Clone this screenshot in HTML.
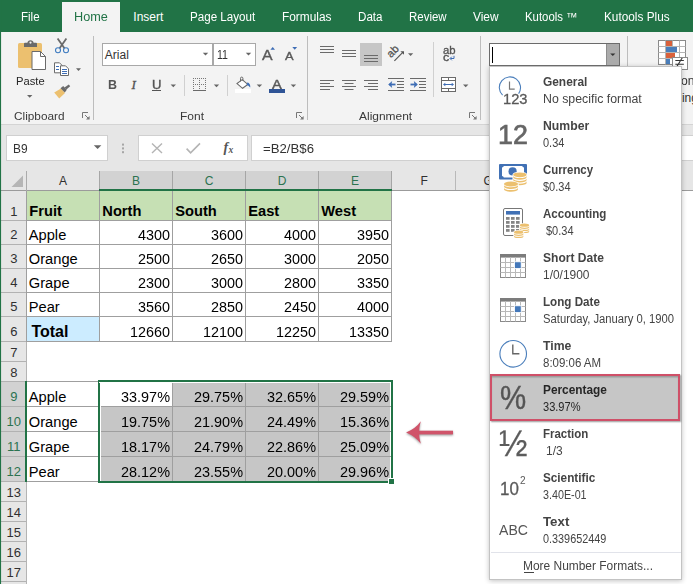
<!DOCTYPE html>
<html>
<head>
<meta charset="utf-8">
<title>Excel - Percentage number format</title>
<style>
*{box-sizing:border-box;margin:0;padding:0}
html,body{width:693px;height:584px;overflow:hidden;background:#fff}
body{position:relative;font-family:"Liberation Sans",sans-serif;font-size:12px;color:#444}
#app{position:absolute;left:0;top:0;width:693px;height:584px;overflow:hidden;background:#fff}
#app div,#app span,#app svg{position:absolute}
.t{white-space:nowrap;line-height:1;transform-origin:0 0}
</style>
</head>
<body>
<div id="app">
<div id="grid" style="left:0;top:0;width:693px;height:584px">
<div style="left:0px;top:171px;width:693px;height:19px;background:#e6e6e6;"></div>
<div style="left:100px;top:171px;width:292px;height:19px;background:#d2d2d2;"></div>
<span class="t" style="left:59.00px;top:175px;font-size:12px;color:#303030;">A</span>
<span class="t" style="left:132.00px;top:175px;font-size:12px;color:#2b7350;">B</span>
<span class="t" style="left:204.67px;top:175px;font-size:12px;color:#2b7350;">C</span>
<span class="t" style="left:277.67px;top:175px;font-size:12px;color:#2b7350;">D</span>
<span class="t" style="left:351.00px;top:175px;font-size:12px;color:#2b7350;">E</span>
<span class="t" style="left:420.53px;top:175px;font-size:12px;color:#303030;">F</span>
<span class="t" style="left:483.53px;top:175px;font-size:12px;color:#303030;">G</span>
<span class="t" style="left:547.87px;top:175px;font-size:12px;color:#303030;">H</span>
<span class="t" style="left:614.53px;top:175px;font-size:12px;color:#303030;">I</span>
<div style="left:99px;top:171px;width:1px;height:19px;background:#a6a6a6;"></div>
<div style="left:172px;top:171px;width:1px;height:19px;background:#a6a6a6;"></div>
<div style="left:245px;top:171px;width:1px;height:19px;background:#a6a6a6;"></div>
<div style="left:318px;top:171px;width:1px;height:19px;background:#a6a6a6;"></div>
<div style="left:391px;top:171px;width:1px;height:19px;background:#a6a6a6;"></div>
<div style="left:455px;top:171px;width:1px;height:19px;background:#b9b9b9;"></div>
<div style="left:519px;top:171px;width:1px;height:19px;background:#b9b9b9;"></div>
<div style="left:583px;top:171px;width:1px;height:19px;background:#b9b9b9;"></div>
<div style="left:647px;top:171px;width:1px;height:19px;background:#b9b9b9;"></div>
<div style="left:1px;top:190px;width:692px;height:1px;background:#9b9b9b;"></div>
<div style="left:99px;top:189px;width:293px;height:2px;background:#217346;"></div>
<div style="left:26px;top:171px;width:1px;height:20px;background:#ababab;"></div>
<svg style="left:11px;top:175px" width="13" height="13" viewBox="0 0 13 13"><path d="M12 0.5V12H0.5Z" fill="#b5b5b5"/></svg>
<div style="left:1px;top:191px;width:25px;height:393px;background:#e6e6e6;"></div>
<div style="left:1px;top:382px;width:25px;height:99px;background:#d2d2d2;"></div>
<span class="t" style="left:10.18px;top:205px;font-size:13px;color:#303030;">1</span>
<div style="left:1px;top:220px;width:25px;height:1px;background:#b2b2b2;"></div>
<span class="t" style="left:10.18px;top:228px;font-size:13px;color:#303030;">2</span>
<div style="left:1px;top:244px;width:25px;height:1px;background:#b2b2b2;"></div>
<span class="t" style="left:10.18px;top:252px;font-size:13px;color:#303030;">3</span>
<div style="left:1px;top:268px;width:25px;height:1px;background:#b2b2b2;"></div>
<span class="t" style="left:10.18px;top:276px;font-size:13px;color:#303030;">4</span>
<div style="left:1px;top:292px;width:25px;height:1px;background:#b2b2b2;"></div>
<span class="t" style="left:10.18px;top:300px;font-size:13px;color:#303030;">5</span>
<div style="left:1px;top:316px;width:25px;height:1px;background:#b2b2b2;"></div>
<span class="t" style="left:10.18px;top:325px;font-size:13px;color:#303030;">6</span>
<div style="left:1px;top:341px;width:25px;height:1px;background:#b2b2b2;"></div>
<span class="t" style="left:10.18px;top:346px;font-size:13px;color:#303030;">7</span>
<div style="left:1px;top:361px;width:25px;height:1px;background:#b2b2b2;"></div>
<span class="t" style="left:10.18px;top:366px;font-size:13px;color:#303030;">8</span>
<div style="left:1px;top:381px;width:25px;height:1px;background:#b2b2b2;"></div>
<span class="t" style="left:10.18px;top:390px;font-size:13px;color:#2b7350;">9</span>
<div style="left:1px;top:406px;width:25px;height:1px;background:#b2b2b2;"></div>
<span class="t" style="left:6.57px;top:415px;font-size:13px;color:#2b7350;">10</span>
<div style="left:1px;top:431px;width:25px;height:1px;background:#b2b2b2;"></div>
<span class="t" style="left:7.05px;top:440px;font-size:13px;color:#2b7350;">11</span>
<div style="left:1px;top:456px;width:25px;height:1px;background:#b2b2b2;"></div>
<span class="t" style="left:6.57px;top:465px;font-size:13px;color:#2b7350;">12</span>
<div style="left:1px;top:481px;width:25px;height:1px;background:#b2b2b2;"></div>
<span class="t" style="left:6.57px;top:486px;font-size:13px;color:#303030;">13</span>
<div style="left:1px;top:501px;width:25px;height:1px;background:#b2b2b2;"></div>
<span class="t" style="left:6.57px;top:506px;font-size:13px;color:#303030;">14</span>
<div style="left:1px;top:521px;width:25px;height:1px;background:#b2b2b2;"></div>
<span class="t" style="left:6.57px;top:526px;font-size:13px;color:#303030;">15</span>
<div style="left:1px;top:541px;width:25px;height:1px;background:#b2b2b2;"></div>
<span class="t" style="left:6.57px;top:546px;font-size:13px;color:#303030;">16</span>
<div style="left:1px;top:561px;width:25px;height:1px;background:#b2b2b2;"></div>
<span class="t" style="left:6.57px;top:566px;font-size:13px;color:#303030;">17</span>
<div style="left:1px;top:581px;width:25px;height:1px;background:#b2b2b2;"></div>
<span class="t" style="left:6.57px;top:586px;font-size:13px;color:#303030;">18</span>
<div style="left:1px;top:601px;width:25px;height:1px;background:#b2b2b2;"></div>
<div style="left:26px;top:191px;width:1px;height:393px;background:#b4b4b4;"></div>
<div style="left:26px;top:191px;width:1px;height:151px;background:#9f9f9f;"></div>
<div style="left:26px;top:382px;width:1px;height:100px;background:#9f9f9f;"></div>
<div style="left:25px;top:381px;width:2px;height:101px;background:#217346;"></div>
<div style="left:27px;top:191px;width:365px;height:29px;background:#c6e0b4;"></div>
<div style="left:27px;top:317px;width:72px;height:24px;background:#ccecff;"></div>
<div style="left:100px;top:383px;width:290px;height:98px;background:#c6c6c6;"></div>
<div style="left:100px;top:383px;width:72px;height:23px;background:#fff;"></div>
<div style="left:99px;top:191px;width:1px;height:151px;background:#9f9f9f;"></div>
<div style="left:99px;top:382px;width:1px;height:100px;background:#9f9f9f;"></div>
<div style="left:172px;top:191px;width:1px;height:151px;background:#9f9f9f;"></div>
<div style="left:172px;top:382px;width:1px;height:100px;background:#9f9f9f;"></div>
<div style="left:245px;top:191px;width:1px;height:151px;background:#9f9f9f;"></div>
<div style="left:245px;top:382px;width:1px;height:100px;background:#9f9f9f;"></div>
<div style="left:318px;top:191px;width:1px;height:151px;background:#9f9f9f;"></div>
<div style="left:318px;top:382px;width:1px;height:100px;background:#9f9f9f;"></div>
<div style="left:391px;top:191px;width:1px;height:151px;background:#9f9f9f;"></div>
<div style="left:391px;top:382px;width:1px;height:100px;background:#9f9f9f;"></div>
<div style="left:27px;top:220px;width:365px;height:1px;background:#9f9f9f;"></div>
<div style="left:27px;top:244px;width:365px;height:1px;background:#9f9f9f;"></div>
<div style="left:27px;top:268px;width:365px;height:1px;background:#9f9f9f;"></div>
<div style="left:27px;top:292px;width:365px;height:1px;background:#9f9f9f;"></div>
<div style="left:27px;top:316px;width:365px;height:1px;background:#9f9f9f;"></div>
<div style="left:27px;top:341px;width:365px;height:1px;background:#9f9f9f;"></div>
<div style="left:27px;top:406px;width:365px;height:1px;background:#9f9f9f;"></div>
<div style="left:27px;top:431px;width:365px;height:1px;background:#9f9f9f;"></div>
<div style="left:27px;top:456px;width:365px;height:1px;background:#9f9f9f;"></div>
<div style="left:27px;top:481px;width:365px;height:1px;background:#9f9f9f;"></div>
<div style="left:27px;top:381px;width:72px;height:1px;background:#9f9f9f;"></div>
<div style="left:98px;top:380px;width:295px;height:103px;border:2px solid #217346"></div>
<div style="left:99px;top:382px;width:292px;height:1px;background:#fff;"></div>
<div style="left:100px;top:382px;width:1px;height:99px;background:#fff;"></div>
<div style="left:388px;top:478px;width:6px;height:6px;background:#fff;"></div>
<div style="left:389px;top:479px;width:5px;height:5px;background:#217346;"></div>
<span class="t" style="left:29.30px;top:204px;font-size:14.667px;color:#000;font-weight:bold;">Fruit</span>
<span class="t" style="left:102.30px;top:204px;font-size:14.667px;color:#000;font-weight:bold;">North</span>
<span class="t" style="left:175.30px;top:204px;font-size:14.667px;color:#000;font-weight:bold;">South</span>
<span class="t" style="left:248.30px;top:204px;font-size:14.667px;color:#000;font-weight:bold;">East</span>
<span class="t" style="left:321.30px;top:204px;font-size:14.667px;color:#000;font-weight:bold;">West</span>
<span class="t" style="left:28.80px;top:228px;font-size:14.667px;color:#000;">Apple</span>
<span class="t" style="left:138.10px;top:228px;font-size:14.667px;color:#000;transform:scaleX(0.9807);">4300</span>
<span class="t" style="left:211.10px;top:228px;font-size:14.667px;color:#000;transform:scaleX(0.9807);">3600</span>
<span class="t" style="left:284.10px;top:228px;font-size:14.667px;color:#000;transform:scaleX(0.9807);">4000</span>
<span class="t" style="left:357.10px;top:228px;font-size:14.667px;color:#000;transform:scaleX(0.9807);">3950</span>
<span class="t" style="left:28.80px;top:252px;font-size:14.667px;color:#000;">Orange</span>
<span class="t" style="left:138.10px;top:252px;font-size:14.667px;color:#000;transform:scaleX(0.9807);">2500</span>
<span class="t" style="left:211.10px;top:252px;font-size:14.667px;color:#000;transform:scaleX(0.9807);">2650</span>
<span class="t" style="left:284.10px;top:252px;font-size:14.667px;color:#000;transform:scaleX(0.9807);">3000</span>
<span class="t" style="left:357.10px;top:252px;font-size:14.667px;color:#000;transform:scaleX(0.9807);">2050</span>
<span class="t" style="left:28.80px;top:276px;font-size:14.667px;color:#000;">Grape</span>
<span class="t" style="left:138.10px;top:276px;font-size:14.667px;color:#000;transform:scaleX(0.9807);">2300</span>
<span class="t" style="left:211.10px;top:276px;font-size:14.667px;color:#000;transform:scaleX(0.9807);">3000</span>
<span class="t" style="left:284.10px;top:276px;font-size:14.667px;color:#000;transform:scaleX(0.9807);">2800</span>
<span class="t" style="left:357.10px;top:276px;font-size:14.667px;color:#000;transform:scaleX(0.9807);">3350</span>
<span class="t" style="left:28.80px;top:300px;font-size:14.667px;color:#000;">Pear</span>
<span class="t" style="left:138.10px;top:300px;font-size:14.667px;color:#000;transform:scaleX(0.9807);">3560</span>
<span class="t" style="left:211.10px;top:300px;font-size:14.667px;color:#000;transform:scaleX(0.9807);">2850</span>
<span class="t" style="left:284.10px;top:300px;font-size:14.667px;color:#000;transform:scaleX(0.9807);">2450</span>
<span class="t" style="left:357.10px;top:300px;font-size:14.667px;color:#000;transform:scaleX(0.9807);">4000</span>
<span class="t" style="left:31.40px;top:324px;font-size:16px;color:#000;font-weight:bold;">Total</span>
<span class="t" style="left:130.10px;top:325px;font-size:14.667px;color:#000;transform:scaleX(0.9807);">12660</span>
<span class="t" style="left:203.10px;top:325px;font-size:14.667px;color:#000;transform:scaleX(0.9807);">12100</span>
<span class="t" style="left:276.10px;top:325px;font-size:14.667px;color:#000;transform:scaleX(0.9807);">12250</span>
<span class="t" style="left:349.10px;top:325px;font-size:14.667px;color:#000;transform:scaleX(0.9807);">13350</span>
<span class="t" style="left:28.80px;top:390px;font-size:14.667px;color:#000;">Apple</span>
<span class="t" style="left:121.10px;top:390px;font-size:14.667px;color:#000;transform:scaleX(0.9850);">33.97%</span>
<span class="t" style="left:194.10px;top:390px;font-size:14.667px;color:#000;transform:scaleX(0.9850);">29.75%</span>
<span class="t" style="left:267.10px;top:390px;font-size:14.667px;color:#000;transform:scaleX(0.9850);">32.65%</span>
<span class="t" style="left:340.10px;top:390px;font-size:14.667px;color:#000;transform:scaleX(0.9850);">29.59%</span>
<span class="t" style="left:28.80px;top:415px;font-size:14.667px;color:#000;">Orange</span>
<span class="t" style="left:121.10px;top:415px;font-size:14.667px;color:#000;transform:scaleX(0.9850);">19.75%</span>
<span class="t" style="left:194.10px;top:415px;font-size:14.667px;color:#000;transform:scaleX(0.9850);">21.90%</span>
<span class="t" style="left:267.10px;top:415px;font-size:14.667px;color:#000;transform:scaleX(0.9850);">24.49%</span>
<span class="t" style="left:340.10px;top:415px;font-size:14.667px;color:#000;transform:scaleX(0.9850);">15.36%</span>
<span class="t" style="left:28.80px;top:440px;font-size:14.667px;color:#000;">Grape</span>
<span class="t" style="left:121.10px;top:440px;font-size:14.667px;color:#000;transform:scaleX(0.9850);">18.17%</span>
<span class="t" style="left:194.10px;top:440px;font-size:14.667px;color:#000;transform:scaleX(0.9850);">24.79%</span>
<span class="t" style="left:267.10px;top:440px;font-size:14.667px;color:#000;transform:scaleX(0.9850);">22.86%</span>
<span class="t" style="left:340.10px;top:440px;font-size:14.667px;color:#000;transform:scaleX(0.9850);">25.09%</span>
<span class="t" style="left:28.80px;top:465px;font-size:14.667px;color:#000;">Pear</span>
<span class="t" style="left:121.10px;top:465px;font-size:14.667px;color:#000;transform:scaleX(0.9850);">28.12%</span>
<span class="t" style="left:194.10px;top:465px;font-size:14.667px;color:#000;transform:scaleX(0.9850);">23.55%</span>
<span class="t" style="left:267.10px;top:465px;font-size:14.667px;color:#000;transform:scaleX(0.9850);">20.00%</span>
<span class="t" style="left:340.10px;top:465px;font-size:14.667px;color:#000;transform:scaleX(0.9850);">29.96%</span>
<svg style="left:396px;top:412px;filter:drop-shadow(0.8px 1px 0.8px rgba(0,0,0,.4))" width="70" height="42" viewBox="396 412 70 42"><path d="M406.1 432.5Q416 428.2 420.8 421.2Q417.4 432.5 420.8 443.7Q416 436.8 406.1 432.5Z" fill="#d0546a"/><rect x="418" y="430.7" width="35" height="3.7" fill="#d0546a"/></svg>
</div>
<div id="chrome" style="left:0;top:0;width:693px;height:171px">
<div style="left:0px;top:0px;width:693px;height:32px;background:#217346;"></div>
<div style="left:62px;top:2px;width:58px;height:30px;background:#f3f3f3;"></div>
<div style="left:0px;top:32px;width:693px;height:92px;background:#f3f3f3;"></div>
<div style="left:0px;top:124px;width:693px;height:1px;background:#d4d4d4;"></div>
<div style="left:0px;top:125px;width:693px;height:46px;background:#e6e6e6;"></div>
<span class="t" style="left:21.00px;top:11px;font-size:12px;color:#fff;transform:scaleX(0.9619);">File</span>
<span class="t" style="left:74.00px;top:11px;font-size:12px;color:#217346;transform:scaleX(1.0559);">Home</span>
<span class="t" style="left:133.30px;top:11px;font-size:12px;color:#fff;">Insert</span>
<span class="t" style="left:189.70px;top:11px;font-size:12px;color:#fff;transform:scaleX(0.9675);">Page Layout</span>
<span class="t" style="left:281.90px;top:11px;font-size:12px;color:#fff;transform:scaleX(0.9898);">Formulas</span>
<span class="t" style="left:357.70px;top:11px;font-size:12px;color:#fff;transform:scaleX(0.9666);">Data</span>
<span class="t" style="left:408.90px;top:11px;font-size:12px;color:#fff;transform:scaleX(0.9556);">Review</span>
<span class="t" style="left:472.50px;top:11px;font-size:12px;color:#fff;transform:scaleX(0.9925);">View</span>
<span class="t" style="left:524.50px;top:11px;font-size:12px;color:#fff;transform:scaleX(0.9483);">Kutools ™</span>
<span class="t" style="left:603.90px;top:11px;font-size:12px;color:#fff;transform:scaleX(0.9835);">Kutools Plus</span>
<div style="left:93px;top:36px;width:1px;height:84px;background:#bdbdbd;"></div>
<div style="left:307px;top:36px;width:1px;height:84px;background:#bdbdbd;"></div>
<div style="left:480px;top:36px;width:1px;height:84px;background:#bdbdbd;"></div>
<div style="left:627px;top:36px;width:1px;height:84px;background:#bdbdbd;"></div>
<div style="left:184px;top:75px;width:1px;height:21px;background:#d0d0d0;"></div>
<div style="left:227px;top:75px;width:1px;height:21px;background:#d0d0d0;"></div>
<div style="left:433px;top:42px;width:1px;height:55px;background:#d0d0d0;"></div>
<span class="t" style="left:13.50px;top:111px;font-size:11.5px;color:#3a3a3a;transform:scaleX(1.0259);">Clipboard</span>
<span class="t" style="left:180.00px;top:111px;font-size:11.5px;color:#3a3a3a;transform:scaleX(1.0430);">Font</span>
<span class="t" style="left:359.00px;top:111px;font-size:11.5px;color:#3a3a3a;transform:scaleX(1.0403);">Alignment</span>
<span class="t" style="left:16.20px;top:76px;font-size:11.5px;color:#262626;transform:scaleX(0.9726);">Paste</span>
<div style="left:102px;top:43px;width:111px;height:23px;background:#fff;border:1px solid #a8a8a8"></div>
<div style="left:213px;top:43px;width:43px;height:23px;background:#fff;border:1px solid #a8a8a8"></div>
<span class="t" style="left:104.80px;top:49px;font-size:12px;color:#333;">Arial</span>
<span class="t" style="left:216.50px;top:49px;font-size:12px;color:#333;transform:scaleX(0.8830);">11</span>
<span class="t" style="left:108.20px;top:79px;font-size:12.5px;color:#555;font-weight:bold;transform:scaleX(0.9970);">B</span>
<span class="t" style="left:131.40px;top:78px;font-size:13px;color:#555;font-style:italic;font-family:'Liberation Serif',serif;-webkit-text-stroke:0.35px #555;">I</span>
<span class="t" style="left:151.80px;top:79px;font-size:12.5px;color:#555;transform:scaleX(1.0413);-webkit-text-stroke:0.4px #555;">U</span>
<div style="left:152px;top:90px;width:9px;height:1px;background:#555;"></div>
<span class="t" style="left:261.60px;top:48px;font-size:14px;color:#595959;transform:scaleX(1.1351);-webkit-text-stroke:0.35px #595959;">A</span>
<span class="t" style="left:284.70px;top:51px;font-size:11.5px;color:#595959;transform:scaleX(1.1212);-webkit-text-stroke:0.35px #595959;">A</span>
<span class="t" style="left:272.40px;top:78.5px;font-size:12.5px;color:#595959;transform:scaleX(1.1754);-webkit-text-stroke:0.45px #595959;">A</span>
<span class="t" style="left:442.80px;top:45px;font-size:11.5px;color:#555;transform:scaleX(0.9850);-webkit-text-stroke:0.35px #555;">ab</span>
<span class="t" style="left:443.00px;top:52px;font-size:11.5px;color:#555;transform:scaleX(1.0783);-webkit-text-stroke:0.35px #555;">c</span>
<span class="t" style="left:643.25px;top:75px;font-size:12px;color:#333;transform:scaleX(1.0160);">Conditional</span>
<span class="t" style="left:640.56px;top:91.5px;font-size:12px;color:#333;">Formatting</span>
<svg style="left:0;top:0" width="693" height="171" viewBox="0 0 693 171"><rect x="18" y="43" width="24" height="25" rx="1.5" fill="#ecc06f"/><path d="M24 47v-3.2q0-1 1-1h2.4q0.3-2.6 3.1-2.6t3.1 2.6H36q1 0 1 1V47z" fill="#6a6a6a"/><circle cx="30.5" cy="42.6" r="1.1" fill="#f3f3f3"/><path d="M32 51.5h8.5l5 5v13h-13.5z" fill="#fff" stroke="#6a6a6a" stroke-width="1"/><path d="M40.5 51.5v5h5" fill="none" stroke="#6a6a6a" stroke-width="1"/><path d="M27 95h5.4l-2.7 2.8z" fill="#666"/><path d="M57.6 38.6L64.6 48.4M66.4 38.6L59.4 48.4" stroke="#6a6a6a" stroke-width="1.8" fill="none"/><circle cx="58" cy="50.2" r="2.5" fill="#f3f3f3" stroke="#3f7cc0" stroke-width="1.1"/><circle cx="66" cy="50.2" r="2.5" fill="#f3f3f3" stroke="#3f7cc0" stroke-width="1.1"/><path d="M54.5 62.8h5l2.5 2.5v7.5h-7.5z" fill="#fff" stroke="#6a6a6a" stroke-width="1"/><path d="M60.5 65.8h5l3 3v6.7h-8z" fill="#fff" stroke="#6a6a6a" stroke-width="1"/><path d="M56 66.5h3M56 69.5h3M62 69.5h5M62 71.5h5M62 73.5h5" stroke="#3e6db5" stroke-width="1" fill="none"/><path d="M76 68.3h5l-2.5 2.6z" fill="#666"/><path d="M54.2 92.5L61 88.6L65 93L59.2 98.6Z" fill="#ecc06f"/><path d="M60.5 88.2L63.2 86L66.8 89.8L64.8 92.6Z" fill="#6a6a6a"/><path d="M64.5 87.5L68.8 84.6L70.2 86.2L66.4 89.6Z" fill="#6a6a6a"/><path d="M82.5 118V112.5H88" stroke="#777" stroke-width="1" fill="none"/><path d="M85 115L89 119" stroke="#777" stroke-width="1" fill="none"/><path d="M89.6 116V119.6H86Z" fill="#777"/><path d="M296.5 118V112.5H302" stroke="#777" stroke-width="1" fill="none"/><path d="M299 115L303 119" stroke="#777" stroke-width="1" fill="none"/><path d="M303.6 116V119.6H300Z" fill="#777"/><path d="M469.5 118V112.5H475" stroke="#777" stroke-width="1" fill="none"/><path d="M472 115L476 119" stroke="#777" stroke-width="1" fill="none"/><path d="M476.6 116V119.6H473Z" fill="#777"/><path d="M202.8 52.8h5.4l-2.7 2.8z" fill="#666"/><path d="M245.8 52.8h5.4l-2.7 2.8z" fill="#666"/><path d="M270.4 49.8h4.6l-2.3-2.8z" fill="#3e6db5"/><path d="M292.3 47h4.8l-2.4 2.8z" fill="#3e6db5"/><path d="M170.6 84.4h5.4l-2.7 2.8z" fill="#666"/><path d="M213.8 84.4h5.4l-2.7 2.8z" fill="#666"/><path d="M256.7 84.4h5.4l-2.7 2.8z" fill="#666"/><path d="M290.7 84.4h5.4l-2.7 2.8z" fill="#666"/><rect x="193" y="78" width="1" height="1" fill="#777"/><rect x="193" y="84" width="1" height="1" fill="#777"/><rect x="195" y="78" width="1" height="1" fill="#777"/><rect x="195" y="84" width="1" height="1" fill="#777"/><rect x="197" y="78" width="1" height="1" fill="#777"/><rect x="197" y="84" width="1" height="1" fill="#777"/><rect x="199" y="78" width="1" height="1" fill="#777"/><rect x="199" y="84" width="1" height="1" fill="#777"/><rect x="201" y="78" width="1" height="1" fill="#777"/><rect x="201" y="84" width="1" height="1" fill="#777"/><rect x="203" y="78" width="1" height="1" fill="#777"/><rect x="203" y="84" width="1" height="1" fill="#777"/><rect x="205" y="78" width="1" height="1" fill="#777"/><rect x="205" y="84" width="1" height="1" fill="#777"/><rect x="193" y="78" width="1" height="1" fill="#777"/><rect x="199" y="78" width="1" height="1" fill="#777"/><rect x="205" y="78" width="1" height="1" fill="#777"/><rect x="193" y="80" width="1" height="1" fill="#777"/><rect x="199" y="80" width="1" height="1" fill="#777"/><rect x="205" y="80" width="1" height="1" fill="#777"/><rect x="193" y="82" width="1" height="1" fill="#777"/><rect x="199" y="82" width="1" height="1" fill="#777"/><rect x="205" y="82" width="1" height="1" fill="#777"/><rect x="193" y="84" width="1" height="1" fill="#777"/><rect x="199" y="84" width="1" height="1" fill="#777"/><rect x="205" y="84" width="1" height="1" fill="#777"/><rect x="193" y="86" width="1" height="1" fill="#777"/><rect x="199" y="86" width="1" height="1" fill="#777"/><rect x="205" y="86" width="1" height="1" fill="#777"/><rect x="193" y="88" width="1" height="1" fill="#777"/><rect x="199" y="88" width="1" height="1" fill="#777"/><rect x="205" y="88" width="1" height="1" fill="#777"/><rect x="193" y="90" width="13" height="1" fill="#6a6a6a"/><path d="M242.2 79.6L247.8 84.4L242.6 88.3L237 83.6Z" fill="#fff" stroke="#6a6a6a" stroke-width="1.1"/><path d="M240.5 81.5v-3.2q0-1.2 1.2-1.2t1.2 1.2v2.5" fill="none" stroke="#6a6a6a" stroke-width="1"/><path d="M247.6 82.2q3.2 1.6 2.6 5.4q-1.6-2.4-3.6-2.6z" fill="#3e6db5"/><rect x="235" y="89" width="16" height="4" fill="#fff"/><rect x="269" y="89" width="16" height="4" fill="#2f5496"/><rect x="320" y="46" width="14" height="1" fill="#6a6a6a"/><rect x="342" y="50" width="14" height="1" fill="#6a6a6a"/><rect x="320" y="49" width="14" height="1" fill="#6a6a6a"/><rect x="342" y="53" width="14" height="1" fill="#6a6a6a"/><rect x="320" y="52" width="14" height="1" fill="#6a6a6a"/><rect x="342" y="56" width="14" height="1" fill="#6a6a6a"/><rect x="360" y="43" width="22" height="23" fill="#c6c6c6"/><rect x="364" y="55" width="14" height="1" fill="#6a6a6a"/><rect x="364" y="58" width="14" height="1" fill="#6a6a6a"/><rect x="364" y="61" width="14" height="1" fill="#6a6a6a"/><path d="M394.4 60.8L403 52.2" stroke="#555" stroke-width="1.2" fill="none"/><path d="M400.4 51.2h3.6v3.6z" fill="#555"/><path d="M408 53.2h5.2l-2.6 2.7z" fill="#666"/><rect x="320" y="80" width="14" height="1" fill="#6a6a6a"/><rect x="342" y="80" width="14" height="1" fill="#6a6a6a"/><rect x="364" y="80" width="14" height="1" fill="#6a6a6a"/><rect x="320" y="83" width="10" height="1" fill="#6a6a6a"/><rect x="344.5" y="83" width="9.0" height="1" fill="#6a6a6a"/><rect x="368" y="83" width="10" height="1" fill="#6a6a6a"/><rect x="320" y="86" width="14" height="1" fill="#6a6a6a"/><rect x="342" y="86" width="14" height="1" fill="#6a6a6a"/><rect x="364" y="86" width="14" height="1" fill="#6a6a6a"/><rect x="320" y="89" width="10" height="1" fill="#6a6a6a"/><rect x="344.5" y="89" width="9.0" height="1" fill="#6a6a6a"/><rect x="368" y="89" width="10" height="1" fill="#6a6a6a"/><rect x="388" y="78" width="16" height="1" fill="#6a6a6a"/><rect x="388" y="90" width="16" height="1" fill="#6a6a6a"/><rect x="397" y="81" width="7" height="1" fill="#6a6a6a"/><rect x="397" y="84" width="7" height="1" fill="#6a6a6a"/><rect x="397" y="87" width="7" height="1" fill="#6a6a6a"/><path d="M395.5 84.5H389.5" stroke="#3e6db5" stroke-width="1.8" fill="none"/><path d="M392.2 80.9L388.2 84.5L392.2 88.1L391.4 84.5Z" fill="#3e6db5"/><rect x="410" y="78" width="16" height="1" fill="#6a6a6a"/><rect x="410" y="90" width="16" height="1" fill="#6a6a6a"/><rect x="419" y="81" width="7" height="1" fill="#6a6a6a"/><rect x="419" y="84" width="7" height="1" fill="#6a6a6a"/><rect x="419" y="87" width="7" height="1" fill="#6a6a6a"/><path d="M410.5 84.5H416.5" stroke="#3e6db5" stroke-width="1.8" fill="none"/><path d="M413.8 80.9L417.8 84.5L413.8 88.1L414.6 84.5Z" fill="#3e6db5"/><path d="M454 55.8v2.7h-3.6M451.8 56.7l-1.8 1.8l1.8 1.8" stroke="#3e6db5" stroke-width="1" fill="none"/><rect x="441.5" y="77.5" width="14" height="14" fill="#fff" stroke="#6a6a6a" stroke-width="1"/><path d="M441.5 80.5h14M441.5 88.5h14M448.5 77.5v3M448.5 88.5v3" stroke="#6a6a6a" stroke-width="1" fill="none"/><path d="M444 84.5h9" stroke="#3e6db5" stroke-width="1" fill="none"/><path d="M445.3 82.7v3.6l-2.3-1.8zM451.7 82.7v3.6l2.3-1.8z" fill="#3e6db5"/><path d="M463 84.4h5.4l-2.7 2.8z" fill="#666"/><rect x="658.5" y="40.5" width="27" height="24" fill="#fff" stroke="#8a8a8a" stroke-width="1"/><path d="M665.5 40.5v24M672.5 40.5v24M679.5 40.5v24M658.5 46.5h27M658.5 52.5h27M658.5 58.5h27" stroke="#b4b4b4" stroke-width="1" fill="none"/><rect x="666" y="41" width="6" height="5" fill="#d9613c"/><rect x="666" y="47" width="11" height="5" fill="#4a7ebb"/><rect x="666" y="53" width="9" height="5" fill="#d9613c"/><rect x="666" y="59" width="4" height="5" fill="#4a7ebb"/><rect x="672.5" y="57.5" width="15" height="12" fill="#fff" stroke="#8a8a8a" stroke-width="1"/></svg>
<span class="t" style="left:675.40px;top:55px;font-size:14px;color:#333;transform:scaleX(1.2494);">≠</span>
<span class="t" style="left:386.3px;top:45.1px;width:13px;height:12px;font-size:11px;line-height:12px;text-align:center;color:#555;-webkit-text-stroke:0.3px #555;transform:rotate(-45deg);transform-origin:50% 50%">ab</span>
<div style="left:6px;top:135px;width:102px;height:26px;background:#fff;border:1px solid #d0d0d0"></div>
<div style="left:138px;top:135px;width:110px;height:26px;background:#fff;border:1px solid #d0d0d0"></div>
<div style="left:251px;top:135px;width:450px;height:26px;background:#fff;border:1px solid #d0d0d0"></div>
<span class="t" style="left:13.40px;top:143px;font-size:12px;color:#333;transform:scaleX(0.9947);">B9</span>
<span class="t" style="left:263.00px;top:143px;font-size:12px;color:#333;transform:scaleX(1.0998);">=B2/B$6</span>
<span class="t" style="left:223.50px;top:141px;font-size:14px;color:#555;font-weight:bold;font-style:italic;font-family:'Liberation Serif',serif;">f</span>
<span class="t" style="left:228.50px;top:145.5px;font-size:9.5px;color:#555;font-weight:bold;font-style:italic;font-family:'Liberation Serif',serif;">x</span>
<svg style="left:0;top:0" width="693" height="171" viewBox="0 0 693 171"><path d="M93.8 145.2h7.6l-3.8 3.8z" fill="#666"/><rect x="122" y="143.6" width="2" height="2" fill="#a6a6a6"/><rect x="122" y="147.4" width="2" height="2" fill="#a6a6a6"/><rect x="122" y="151.2" width="2" height="2" fill="#a6a6a6"/><path d="M152 143.5l10 9.5M162 143.5l-10 9.5" stroke="#b4b4b4" stroke-width="1.4" fill="none"/><path d="M186.6 148.6l4 4.2l9.4-9.4" stroke="#b4b4b4" stroke-width="1.6" fill="none"/></svg>
</div>
<div id="dropdown" style="left:0;top:0;width:693px;height:584px">
<div style="left:489px;top:66px;width:193px;height:514px;background:#fff;border:1px solid #c3c3c3;box-shadow:0 1px 5px rgba(0,0,0,.24)"></div>
<div style="left:489px;top:43px;width:131px;height:23px;background:#fff;border:1px solid #6b6b6b"></div>
<div style="left:606px;top:44px;width:13px;height:21px;background:#ababab;"></div>
<div style="left:606px;top:44px;width:1px;height:21px;background:#8c8c8c;"></div>
<div style="left:492px;top:47px;width:1px;height:16px;background:#000;"></div>
<svg style="left:606px;top:44px" width="14" height="21" viewBox="606 44 14 21"><path d="M610.2 53.4h5.2l-2.6 2.7z" fill="#333"/></svg>
<div style="left:490px;top:374px;width:190px;height:47px;background:#c6c6c6;border:2px solid #cf5068;box-shadow:1px 1px 1.5px rgba(0,0,0,.4),inset 0 1.5px 1px rgba(0,0,0,.22)"></div>
<span class="t" style="left:543.00px;top:76px;font-size:12px;color:#444;font-weight:bold;transform:scaleX(0.9913);">General</span>
<span class="t" style="left:543.00px;top:93px;font-size:12px;color:#444;transform:scaleX(1.0278);">No specific format</span>
<span class="t" style="left:543.00px;top:120px;font-size:12px;color:#444;font-weight:bold;transform:scaleX(1.0190);">Number</span>
<span class="t" style="left:543.00px;top:137px;font-size:12px;color:#444;transform:scaleX(0.9163);">0.34</span>
<span class="t" style="left:543.00px;top:164px;font-size:12px;color:#444;font-weight:bold;transform:scaleX(0.9490);">Currency</span>
<span class="t" style="left:543.00px;top:181px;font-size:12px;color:#444;transform:scaleX(0.9158);">$0.34</span>
<span class="t" style="left:543.00px;top:208px;font-size:12px;color:#444;font-weight:bold;transform:scaleX(0.9607);">Accounting</span>
<span class="t" style="left:546.30px;top:225px;font-size:12px;color:#444;transform:scaleX(0.9158);">$0.34</span>
<span class="t" style="left:543.00px;top:252px;font-size:12px;color:#444;font-weight:bold;transform:scaleX(1.0037);">Short Date</span>
<span class="t" style="left:543.00px;top:269px;font-size:12px;color:#444;transform:scaleX(0.9955);">1/0/1900</span>
<span class="t" style="left:543.00px;top:296px;font-size:12px;color:#444;font-weight:bold;transform:scaleX(0.9699);">Long Date</span>
<span class="t" style="left:543.00px;top:313px;font-size:12px;color:#444;transform:scaleX(0.9373);">Saturday, January 0, 1900</span>
<span class="t" style="left:543.00px;top:340px;font-size:12px;color:#444;font-weight:bold;transform:scaleX(1.0183);">Time</span>
<span class="t" style="left:543.00px;top:357px;font-size:12px;color:#444;transform:scaleX(0.9570);">8:09:06 AM</span>
<span class="t" style="left:543.00px;top:384px;font-size:12px;color:#262626;font-weight:bold;transform:scaleX(0.9876);">Percentage</span>
<span class="t" style="left:543.00px;top:401px;font-size:12px;color:#262626;transform:scaleX(0.9214);">33.97%</span>
<span class="t" style="left:543.00px;top:428px;font-size:12px;color:#444;font-weight:bold;transform:scaleX(0.9569);">Fraction</span>
<span class="t" style="left:546.30px;top:445px;font-size:12px;color:#444;transform:scaleX(0.9951);">1/3</span>
<span class="t" style="left:543.00px;top:472px;font-size:12px;color:#444;font-weight:bold;transform:scaleX(0.9784);">Scientific</span>
<span class="t" style="left:543.00px;top:489px;font-size:12px;color:#444;transform:scaleX(0.8952);">3.40E-01</span>
<span class="t" style="left:543.00px;top:516px;font-size:12px;color:#444;font-weight:bold;transform:scaleX(1.1058);">Text</span>
<span class="t" style="left:543.00px;top:533px;font-size:12px;color:#444;transform:scaleX(0.9033);">0.339652449</span>
<div style="left:491px;top:552px;width:190px;height:1px;background:#e1e3ea;"></div>
<span class="t" style="left:523.00px;top:560px;font-size:12px;color:#444;transform:scaleX(0.9947);">More Number Formats...</span>
<div style="left:523.5px;top:571.5px;width:10px;height:1px;background:#444;"></div>
<span class="t" style="left:503.00px;top:91px;font-size:15px;color:#595959;transform:scaleX(0.9789);-webkit-text-stroke:0.3px #595959;">123</span>
<span class="t" style="left:498.00px;top:121px;font-size:27.5px;color:#666;transform:scaleX(0.9742);-webkit-text-stroke:0.7px #666;">12</span>
<span class="t" style="left:499.60px;top:381px;font-size:33px;color:#555;transform:scaleX(0.8929);-webkit-text-stroke:0.4px #555;">%</span>
<span class="t" style="left:499.00px;top:426px;font-size:36px;color:#5c5c5c;transform:scaleX(0.9493);-webkit-text-stroke:0.25px #5c5c5c;">½</span>
<span class="t" style="left:500.20px;top:480px;font-size:18px;color:#595959;transform:scaleX(0.9390);-webkit-text-stroke:0.3px #595959;">10</span>
<span class="t" style="left:520.20px;top:476.2px;font-size:10px;color:#595959;transform:scaleX(1.0069);">2</span>
<span class="t" style="left:498.60px;top:523px;font-size:14.667px;color:#555;transform:scaleX(0.9616);">ABC</span>
<svg style="left:0;top:0" width="693" height="584" viewBox="0 0 693 584"><path d="M502.6 95.2A10.6 10.6 0 1 1 518.6 93.6" fill="none" stroke="#4a7ebb" stroke-width="1.1"/><path d="M509.5 81.6v7.6h5.2" fill="none" stroke="#777" stroke-width="1.2"/><rect x="499" y="164" width="28" height="15.5" rx="1" fill="#4171b5"/><path d="M502 167.5q1.5-0.2 1.8-1.5h18.4q0.3 1.3 1.8 1.5v8.5q-1.5 0.2-1.8 1.5h-18.4q-0.3-1.3-1.8-1.5z" fill="#fff"/><circle cx="512.6" cy="171.4" r="4.1" fill="#4171b5"/><path d="M512.5 174.8A7.4 3.0999999999999996 0 0 1 527.3000000000001 174.8V182.9A7.4 3.0999999999999996 0 0 1 512.5 182.9Z" fill="#fff"/><ellipse cx="519.9000000000001" cy="174.8" rx="6.7" ry="2.4" fill="#ecc06f"/><path d="M513.2 175.70000000000002A6.7 2.4 0 0 0 526.6 175.70000000000002v1.6A6.7 2.4 0 0 1 513.2 177.3Z" fill="#ecc06f"/><path d="M513.2 178.50000000000003A6.7 2.4 0 0 0 526.6 178.50000000000003v1.6A6.7 2.4 0 0 1 513.2 180.10000000000002Z" fill="#ecc06f"/><path d="M513.2 181.3A6.7 2.4 0 0 0 526.6 181.3v1.6A6.7 2.4 0 0 1 513.2 182.9Z" fill="#ecc06f"/><path d="M503.3 184.0A7.7 3.0999999999999996 0 0 1 518.7 184.0V189.3A7.7 3.0999999999999996 0 0 1 503.3 189.3Z" fill="#fff"/><ellipse cx="511.0" cy="184.0" rx="7.0" ry="2.4" fill="#ecc06f"/><path d="M504 184.9A7.0 2.4 0 0 0 518 184.9v1.6A7.0 2.4 0 0 1 504 186.5Z" fill="#ecc06f"/><path d="M504 187.70000000000002A7.0 2.4 0 0 0 518 187.70000000000002v1.6A7.0 2.4 0 0 1 504 189.3Z" fill="#ecc06f"/><rect x="503.5" y="208.5" width="19" height="27" rx="1.5" fill="#fff" stroke="#777" stroke-width="1"/><rect x="506" y="211" width="14" height="3.6" fill="#4171b5"/><rect x="506" y="217" width="3.6" height="2.8" fill="#858585"/><rect x="511" y="217" width="3.6" height="2.8" fill="#858585"/><rect x="516" y="217" width="3.6" height="2.8" fill="#858585"/><rect x="506" y="221" width="3.6" height="2.8" fill="#858585"/><rect x="511" y="221" width="3.6" height="2.8" fill="#858585"/><rect x="516" y="221" width="3.6" height="2.8" fill="#858585"/><rect x="506" y="225" width="3.6" height="2.8" fill="#858585"/><rect x="511" y="225" width="3.6" height="2.8" fill="#858585"/><rect x="516" y="225" width="3.6" height="2.8" fill="#858585"/><rect x="506" y="229" width="3.6" height="2.8" fill="#858585"/><rect x="511" y="229" width="3.6" height="2.8" fill="#858585"/><rect x="516" y="229" width="3.6" height="2.8" fill="#858585"/><path d="M519.0999999999999 225.2A5.4 2.3 0 0 1 529.9 225.2V231.49999999999997A5.4 2.3 0 0 1 519.0999999999999 231.49999999999997Z" fill="#fff"/><ellipse cx="524.5" cy="225.2" rx="4.7" ry="1.6" fill="#ecc06f"/><path d="M519.8 226.1A4.7 1.6 0 0 0 529.1999999999999 226.1v1.2A4.7 1.6 0 0 1 519.8 227.29999999999998Z" fill="#ecc06f"/><path d="M519.8 228.2A4.7 1.6 0 0 0 529.1999999999999 228.2v1.2A4.7 1.6 0 0 1 519.8 229.39999999999998Z" fill="#ecc06f"/><path d="M519.8 230.29999999999998A4.7 1.6 0 0 0 529.1999999999999 230.29999999999998v1.2A4.7 1.6 0 0 1 519.8 231.49999999999997Z" fill="#ecc06f"/><path d="M513.3 232.2A5.4 2.3 0 0 1 524.1 232.2V236.39999999999998A5.4 2.3 0 0 1 513.3 236.39999999999998Z" fill="#fff"/><ellipse cx="518.7" cy="232.2" rx="4.7" ry="1.6" fill="#ecc06f"/><path d="M514 233.1A4.7 1.6 0 0 0 523.4 233.1v1.2A4.7 1.6 0 0 1 514 234.29999999999998Z" fill="#ecc06f"/><path d="M514 235.2A4.7 1.6 0 0 0 523.4 235.2v1.2A4.7 1.6 0 0 1 514 236.39999999999998Z" fill="#ecc06f"/><rect x="500.5" y="254.5" width="25" height="23" fill="#fff" stroke="#8a8a8a" stroke-width="1"/><rect x="500" y="254" width="26" height="3.6" fill="#7c7c7c"/><path d="M505.5 257v20.5M510.5 257v20.5M515.5 257v20.5M520.5 257v20.5M500.5 262.5h25M500.5 267.5h25M500.5 272.5h25" stroke="#b9b9b9" stroke-width="1" fill="none"/><rect x="514.6" y="261.8" width="6.6" height="6.6" fill="#4478ba" stroke="#fff" stroke-width="0.8"/><rect x="500.5" y="298.5" width="25" height="23" fill="#fff" stroke="#8a8a8a" stroke-width="1"/><rect x="500" y="298" width="26" height="3.6" fill="#7c7c7c"/><path d="M505.5 301v20.5M510.5 301v20.5M515.5 301v20.5M520.5 301v20.5M500.5 306.5h25M500.5 311.5h25M500.5 316.5h25" stroke="#b9b9b9" stroke-width="1" fill="none"/><rect x="514.6" y="305.8" width="6.6" height="6.6" fill="#4478ba" stroke="#fff" stroke-width="0.8"/><circle cx="513.2" cy="353.8" r="13.3" fill="none" stroke="#4a7ebb" stroke-width="1.1"/><path d="M512.8 344.6v9.2h6.6" fill="none" stroke="#666" stroke-width="1.4"/></svg>
</div>
<div style="left:0;top:0;width:1px;height:584px;background:#217346"></div><div style="left:1px;top:0;width:1px;height:584px;background:rgba(33,115,70,.08)"></div>
</div>
</body>
</html>
